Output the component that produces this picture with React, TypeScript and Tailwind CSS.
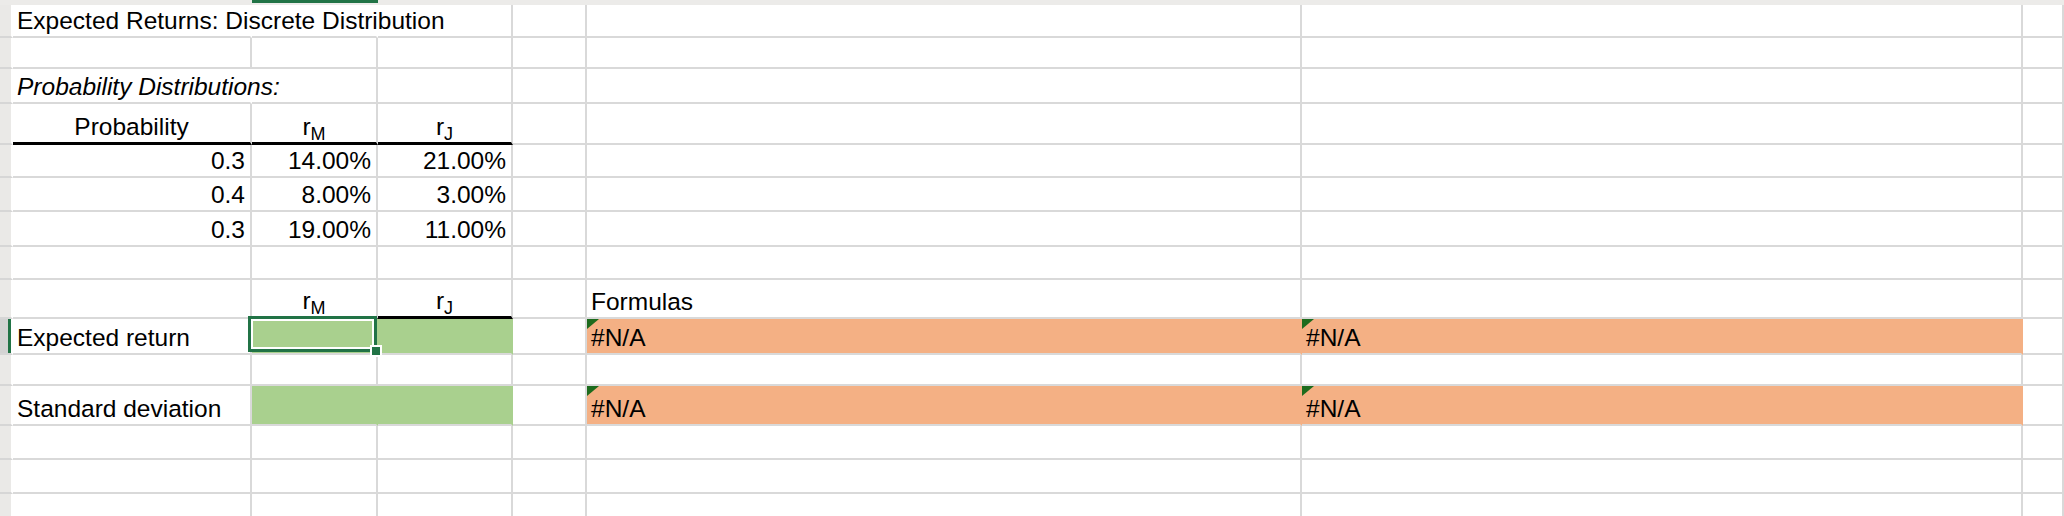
import React from 'react';
import clsx from 'clsx';

type Spec = {
  text?: React.ReactNode;
  align?: 'left' | 'right' | 'center';
  fill?: 'green' | 'orange';
  noRight?: boolean;
  blackBottom?: boolean;
  italic?: boolean;
  error?: boolean;
  selected?: boolean;
};

type Row = {
  h: string;
  selected?: boolean;
  cells: Spec[];
};

// column widths: A..F, G takes the rest
const COLS = ['w-[239px]', 'w-[126px]', 'w-[135px]', 'w-[74px]', 'w-[715px]', 'w-[721px]', 'flex-1'];

const R = ({ sub }: { sub: string }) => (
  <span>
    r<span className="relative top-[5px] text-[18px]">{sub}</span>
  </span>
);

const empty = (n: number): Spec[] => Array.from({ length: n }, () => ({}));

const ROWS: Row[] = [
  {
    h: 'h-[33px]',
    cells: [
      { text: 'Expected Returns: Discrete Distribution', noRight: true },
      { noRight: true },
      ...empty(5),
    ],
  },
  { h: 'h-[31px]', cells: empty(7) },
  {
    h: 'h-[35px]',
    cells: [{ text: 'Probability Distributions:', italic: true, noRight: true }, ...empty(6)],
  },
  {
    h: 'h-[41px]',
    cells: [
      { text: 'Probability', align: 'center', blackBottom: true },
      { text: <R sub="M" />, align: 'center', blackBottom: true },
      { text: <R sub="J" />, align: 'center', blackBottom: true },
      ...empty(4),
    ],
  },
  {
    h: 'h-[33px]',
    cells: [
      { text: '0.3', align: 'right' },
      { text: '14.00%', align: 'right' },
      { text: '21.00%', align: 'right' },
      ...empty(4),
    ],
  },
  {
    h: 'h-[34px]',
    cells: [
      { text: '0.4', align: 'right' },
      { text: '8.00%', align: 'right' },
      { text: '3.00%', align: 'right' },
      ...empty(4),
    ],
  },
  {
    h: 'h-[35px]',
    cells: [
      { text: '0.3', align: 'right' },
      { text: '19.00%', align: 'right' },
      { text: '11.00%', align: 'right' },
      ...empty(4),
    ],
  },
  { h: 'h-[33px]', cells: empty(7) },
  {
    h: 'h-[39px]',
    cells: [
      {},
      { text: <R sub="M" />, align: 'center', blackBottom: true },
      { text: <R sub="J" />, align: 'center', blackBottom: true },
      {},
      { text: 'Formulas' },
      {},
      {},
    ],
  },
  {
    h: 'h-[36px]',
    selected: true,
    cells: [
      { text: 'Expected return' },
      { fill: 'green', selected: true },
      { fill: 'green' },
      {},
      { text: '#N/A', fill: 'orange', error: true },
      { text: '#N/A', fill: 'orange', error: true },
      {},
    ],
  },
  { h: 'h-[31px]', cells: empty(7) },
  {
    h: 'h-[40px]',
    cells: [
      { text: 'Standard deviation' },
      { fill: 'green' },
      { fill: 'green' },
      {},
      { text: '#N/A', fill: 'orange', error: true },
      { text: '#N/A', fill: 'orange', error: true },
      {},
    ],
  },
  { h: 'h-[34px]', cells: empty(7) },
  { h: 'h-[34px]', cells: empty(7) },
  { h: 'h-[34px]', cells: empty(7) },
];

function Cell({ w, spec }: { w: string; spec: Spec }) {
  const align = spec.align ?? 'left';
  return (
    <div
      className={clsx(
        'relative flex shrink-0 items-end whitespace-nowrap border-b-2 border-r-2 border-[#d9d9d9] pb-[3px] leading-none',
        w,
        align === 'right' && 'justify-end pr-[5px]',
        align === 'center' && 'justify-center',
        align === 'left' && 'pl-[4px]',
        spec.fill === 'green' && 'border-r-transparent bg-[#a9d08e]',
        spec.fill === 'orange' && 'border-r-transparent bg-[#f4b084]',
        spec.noRight && 'border-r-transparent',
        spec.blackBottom && 'border-b-[3px] border-b-black',
        spec.italic && 'italic'
      )}
    >
      {spec.error && (
        <span className="absolute left-0 top-0 h-0 w-0 border-r-[12px] border-t-[10px] border-r-transparent border-t-[#1d6b1d]" />
      )}
      {spec.text}
      {spec.selected && (
        <>
          <div className="absolute left-[-4px] top-[-3px] z-10 h-[36px] w-[129px] border-[3px] border-[#217346]">
            <div className="h-full w-full border-2 border-white" />
          </div>
          <div className="absolute left-[118px] top-[26px] z-20 h-[12px] w-[12px] border-2 border-white bg-[#217346]" />
        </>
      )}
    </div>
  );
}

export default function App() {
  return (
    <div className="h-[516px] w-[2064px] overflow-hidden bg-white font-['Liberation_Sans',Arial,sans-serif] text-[24.5px] text-black">
      <div className="flex h-[5px] bg-[#ecebe9]">
        <div className="w-[252px] shrink-0" />
        <div className="h-[3px] w-[126px] shrink-0 bg-[#217346]" />
      </div>
      {ROWS.map((row, i) => (
        <div key={i} className={clsx('flex', row.h)}>
          <div
            className={clsx(
              'relative w-[13px] shrink-0 border-b-2 border-r-2 border-b-[#d6d6d6] border-r-white',
              row.selected ? 'bg-[#d3d3d3]' : 'bg-[#eae9e7]'
            )}
          >
            {row.selected && <div className="absolute bottom-0 right-0 top-0 w-[3px] bg-[#217346]" />}
          </div>
          {row.cells.map((c, j) => (
            <Cell key={j} w={COLS[j]} spec={c} />
          ))}
        </div>
      ))}
    </div>
  );
}
